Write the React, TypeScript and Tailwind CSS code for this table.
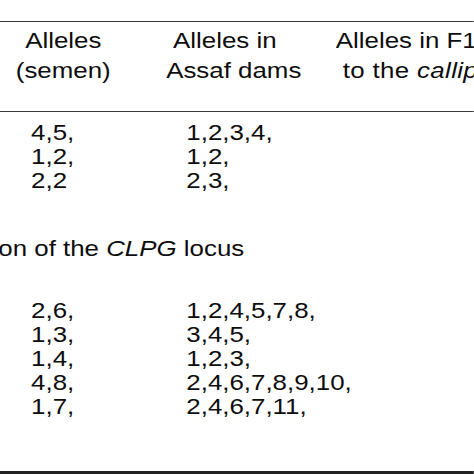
export default function App() {
  const first = [
    ["4,5,", "1,2,3,4,"],
    ["1,2,", "1,2,"],
    ["2,2", "2,3,"],
  ]
  const second = [
    ["2,6,", "1,2,4,5,7,8,"],
    ["1,3,", "3,4,5,"],
    ["1,4,", "1,2,3,"],
    ["4,8,", "2,4,6,7,8,9,10,"],
    ["1,7,", "2,4,6,7,11,"],
  ]

  return (
    <div className="w-[474px] h-[474px] overflow-hidden bg-white">
      <div className="w-[412px] origin-left scale-x-[1.15] font-['Liberation_Sans',Arial,sans-serif] text-[22.5px] text-[#0d0d0d] whitespace-nowrap pt-[21px]">
        {/* Header */}
        <div className="border-t border-b border-[#3a3a3a] pt-[4px] pb-[25px] grid grid-cols-[110px_182px_1fr] leading-[30px]">
          <div className="text-center">
            <div>Alleles</div>
            <div>(semen)</div>
          </div>
          <div>
            <div className="pl-[40.5px]">Alleles in</div>
            <div className="pl-[34.5px]">Assaf dams</div>
          </div>
          <div className="overflow-hidden">
            <div>Alleles in F1 linked</div>
            <div className="pl-[6px] tracking-[0.3px]">
              to the <span className="italic">callipyge</span> allele
            </div>
          </div>
        </div>

        {/* First group */}
        <div className="pt-[8.5px] leading-[24px]">
          {first.map(([a, b], i) => (
            <div key={i} className="grid grid-cols-[162px_1fr]">
              <div className="pl-[27px]">{a}</div>
              <div>{b}</div>
            </div>
          ))}
        </div>

        {/* Second group */}
        <div className="mt-[44.5px] leading-[24px] -ml-[1.5px]">
          on of the <span className="italic">CLPG</span> locus
        </div>
        <div className="mt-[38px] leading-[24px]">
          {second.map(([a, b], i) => (
            <div key={i} className="grid grid-cols-[162px_1fr]">
              <div className="pl-[27px]">{a}</div>
              <div>{b}</div>
            </div>
          ))}
        </div>

        <div className="mt-[51.5px] h-[3px] bg-[#222]" />
      </div>
    </div>
  )
}
